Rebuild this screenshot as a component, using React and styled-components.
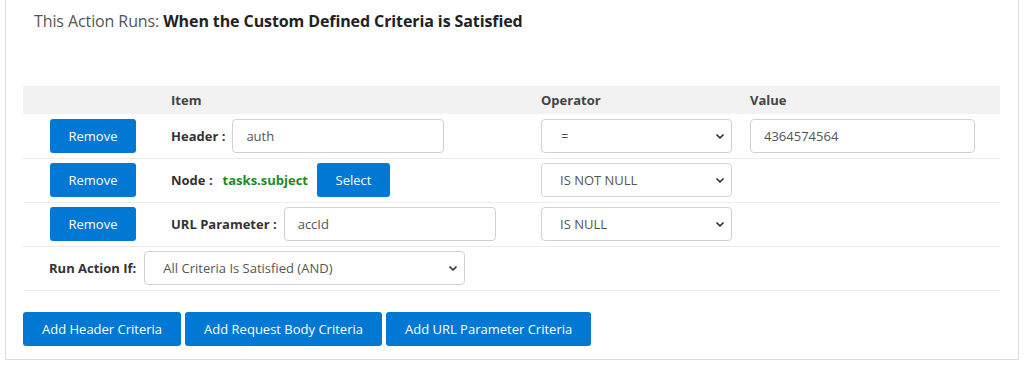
import React from "react";
import styled, { createGlobalStyle } from "styled-components";

const Global = createGlobalStyle`
  html, body { margin: 0; padding: 0; background: #fff; }
  body { font-family: "Open Sans", "Noto Sans", "Liberation Sans", sans-serif; color: #333; }
  * { box-sizing: border-box; }
`;

const Panel = styled.div`
  margin-left: 5px;
  width: 1014px;
  border: 1px solid #dcdcdc;
  border-top: none;
  padding: 0 18px 13px 17px;
`;

const Title = styled.div`
  padding: 10px 0 0 11px;
  height: 86px;
  font-size: 16px;
  line-height: 22px;
  color: #555;
  letter-spacing: -0.1px;
`;

const Strong = styled.span`
  font-weight: 700;
  color: #222;
`;

const Table = styled.table`
  width: 977px;
  border-collapse: collapse;
  table-layout: fixed;
`;

const HeadCell = styled.th`
  background: #f2f2f2;
  height: 28px;
  padding: 0 8px;
  text-align: left;
  font-size: 13px;
  font-weight: 700;
  color: #444;
  width: ${(p) => p.$w}px;
`;

const Row = styled.tr`
  border-bottom: 1px solid #ececec;
`;

const Cell = styled.td`
  height: 44px;
  padding: 0 ${(p) => (p.$pr != null ? p.$pr : 8)}px 0 ${(p) => (p.$pl != null ? p.$pl : 8)}px;
  text-align: ${(p) => (p.$center ? "center" : "left")};
  vertical-align: middle;
`;

const Inline = styled.div`
  display: flex;
  align-items: center;
  gap: ${(p) => p.$gap || 8}px;
`;

const Button = styled.button`
  height: 34px;
  padding: 0 ${(p) => (p.$px != null ? p.$px : 19)}px;
  width: ${(p) => (p.$w ? `${p.$w}px` : "auto")};
  border: none;
  border-radius: 3px;
  background: #0078d4;
  color: #fff;
  font-family: inherit;
  font-size: 13px;
  cursor: pointer;
`;

const Label = styled.span`
  font-size: 13px;
  font-weight: 700;
  color: #333;
  white-space: nowrap;
`;

const NodeValue = styled.span`
  font-size: 13px;
  font-weight: 700;
  color: #1f8a1f;
  margin-left: 1px;
`;

const TextInput = styled.input`
  width: ${(p) => p.$w}px;
  height: 34px;
  border: 1px solid #d2d2d2;
  border-radius: 4px;
  padding: 0 13px;
  font-family: inherit;
  font-size: 13px;
  color: #555;
  outline: none;
`;

const SelectWrap = styled.div`
  position: relative;
  width: ${(p) => p.$w}px;
`;

const Select = styled.select`
  appearance: none;
  -webkit-appearance: none;
  width: 100%;
  height: 34px;
  border: 1px solid #d2d2d2;
  border-radius: 4px;
  background: #fff;
  padding: 0 30px 0 ${(p) => p.$pl || 18}px;
  font-family: inherit;
  font-size: 13px;
  color: #555;
  outline: none;
`;

const Chevron = styled.svg`
  position: absolute;
  right: 8px;
  top: 15px;
  width: 8px;
  height: 5px;
  pointer-events: none;
`;

const Footer = styled.div`
  display: flex;
  gap: 4px;
  padding-top: 21px;
`;

function Dropdown({ w, value, options, pl }) {
  return (
    <SelectWrap $w={w}>
      <Select $pl={pl} defaultValue={value}>
        {options.map((o) => (
          <option key={o}>{o}</option>
        ))}
      </Select>
      <Chevron viewBox="0 0 8 5">
        <path d="M1 1l3 3 3-3" fill="none" stroke="#333" strokeWidth="1.7" strokeLinecap="round" strokeLinejoin="round" />
      </Chevron>
    </SelectWrap>
  );
}

const ops = ["=", "!=", "IS NULL", "IS NOT NULL"];

export default function App() {
  return (
    <>
      <Global />
      <Panel>
        <Title>
          This Action Runs: <Strong>When the Custom Defined Criteria is Satisfied</Strong>
        </Title>
        <Table>
          <thead>
            <tr>
              <HeadCell $w={140}></HeadCell>
              <HeadCell $w={370}>Item</HeadCell>
              <HeadCell $w={209}>Operator</HeadCell>
              <HeadCell $w={258}>Value</HeadCell>
            </tr>
          </thead>
          <tbody>
            <Row>
              <Cell $center $pl={0} $pr={0}>
                <Button $w={86} $px={0}>Remove</Button>
              </Cell>
              <Cell>
                <Inline $gap={7}>
                  <Label>Header :</Label>
                  <TextInput $w={212} defaultValue="auth" />
                </Inline>
              </Cell>
              <Cell>
                <Dropdown w={191} value="=" options={ops} pl={19} />
              </Cell>
              <Cell>
                <TextInput $w={225} defaultValue="4364574564" />
              </Cell>
            </Row>
            <Row>
              <Cell $center $pl={0} $pr={0}>
                <Button $w={86} $px={0}>Remove</Button>
              </Cell>
              <Cell>
                <Inline $gap={9}>
                  <Label>Node :</Label>
                  <NodeValue>tasks.subject</NodeValue>
                  <Button $w={73} $px={0}>Select</Button>
                </Inline>
              </Cell>
              <Cell>
                <Dropdown w={191} value="IS NOT NULL" options={ops} />
              </Cell>
              <Cell></Cell>
            </Row>
            <Row>
              <Cell $center $pl={0} $pr={0}>
                <Button $w={86} $px={0}>Remove</Button>
              </Cell>
              <Cell>
                <Inline $gap={7}>
                  <Label>URL Parameter :</Label>
                  <TextInput $w={212} defaultValue="accId" />
                </Inline>
              </Cell>
              <Cell>
                <Dropdown w={191} value="IS NULL" options={ops} />
              </Cell>
              <Cell></Cell>
            </Row>
            <Row>
              <Cell colSpan={4} $pl={26}>
                <Inline $gap={8}>
                  <Label>Run Action If:</Label>
                  <Dropdown
                    w={321}
                    value="All Criteria Is Satisfied (AND)"
                    options={["All Criteria Is Satisfied (AND)", "Any Criteria Is Satisfied (OR)"]}
                  />
                </Inline>
              </Cell>
            </Row>
          </tbody>
        </Table>
        <Footer>
          <Button>Add Header Criteria</Button>
          <Button>Add Request Body Criteria</Button>
          <Button>Add URL Parameter Criteria</Button>
        </Footer>
      </Panel>
    </>
  );
}
